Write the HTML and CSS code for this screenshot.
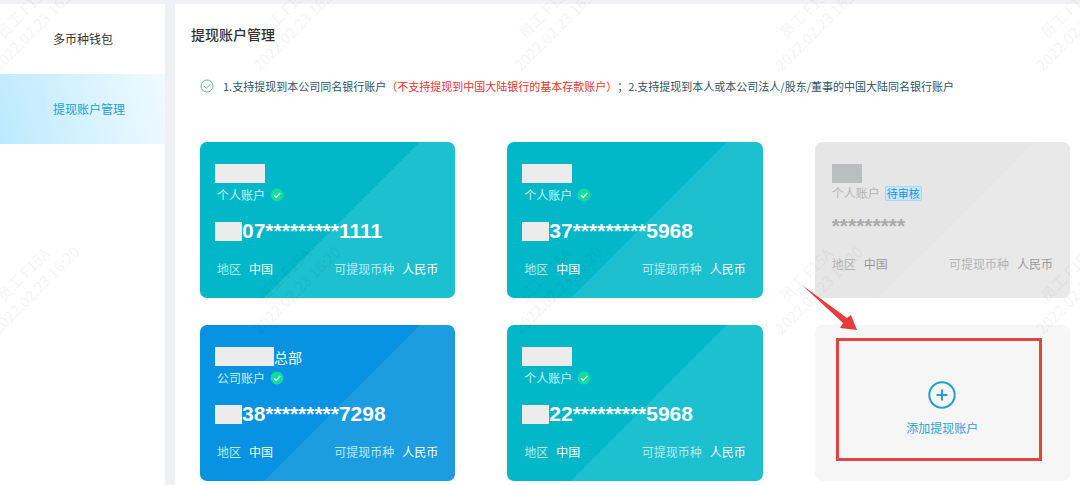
FILE: index.html
```html
<!DOCTYPE html>
<html lang="zh-CN">
<head>
    <meta charset="UTF-8">
    <meta name="viewport" content="width=device-width, initial-scale=1.0">
    <title>提现账户管理</title>
    <link rel="stylesheet" href="styles.css">
</head>
<body>
    <svg class="sprite" aria-hidden="true">
        <symbol id="verified" viewBox="0 0 14 14">
            <circle cx="7" cy="7" r="6.5" fill="#14dc9c"/>
            <path d="M4 7.2l2.2 2.2L10.2 5" fill="none" stroke="#d8fff2" stroke-width="1.5"/>
        </symbol>
    </svg>

    <div class="layout">
        <nav class="sidebar">
            <a href="#wallet" class="menu-item">多币种钱包</a>
            <a href="#accounts" class="menu-item active">提现账户管理</a>
        </nav>

        <main class="content">
            <h1>提现账户管理</h1>
            <p class="tip">
                <svg class="tip-icon" viewBox="0 0 14 14" aria-hidden="true">
                    <circle cx="7" cy="7" r="6" fill="none" stroke="#5cc09a"/>
                    <path d="M4 7l2.3 2.3L10.3 5.2" fill="none" stroke="#5cc09a"/>
                </svg>
                <span>1.支持提现到本公司同名银行账户<em>（不支持提现到中国大陆银行的基本存款账户）</em>；2.支持提现到本人或本公司法人/股东/董事的中国大陆同名银行账户</span>
            </p>

            <div class="cards">
                <article class="card">
                    <div class="name"><span class="mask"></span></div>
                    <div class="type">个人账户<svg class="verified"><use href="#verified"/></svg></div>
                    <div class="number"><span class="mask short"></span>07*********1111</div>
                    <div class="info">
                        <span>地区<b>中国</b></span>
                        <span>可提现币种<b>人民币</b></span>
                    </div>
                </article>

                <article class="card">
                    <div class="name"><span class="mask"></span></div>
                    <div class="type">个人账户<svg class="verified"><use href="#verified"/></svg></div>
                    <div class="number"><span class="mask short"></span>37*********5968</div>
                    <div class="info">
                        <span>地区<b>中国</b></span>
                        <span>可提现币种<b>人民币</b></span>
                    </div>
                </article>

                <article class="card pending">
                    <div class="name"><span class="mask"></span></div>
                    <div class="type">个人账户<span class="tag">待审核</span></div>
                    <div class="number">*********</div>
                    <div class="info">
                        <span>地区<b>中国</b></span>
                        <span>可提现币种<b>人民币</b></span>
                    </div>
                </article>

                <article class="card company">
                    <div class="name"><span class="mask long"></span>总部</div>
                    <div class="type">公司账户<svg class="verified"><use href="#verified"/></svg></div>
                    <div class="number"><span class="mask short"></span>38*********7298</div>
                    <div class="info">
                        <span>地区<b>中国</b></span>
                        <span>可提现币种<b>人民币</b></span>
                    </div>
                </article>

                <article class="card">
                    <div class="name"><span class="mask"></span></div>
                    <div class="type">个人账户<svg class="verified"><use href="#verified"/></svg></div>
                    <div class="number"><span class="mask short"></span>22*********5968</div>
                    <div class="info">
                        <span>地区<b>中国</b></span>
                        <span>可提现币种<b>人民币</b></span>
                    </div>
                </article>

                <div class="add-wrapper">
                    <button type="button" class="add">
                        <svg class="add-icon" viewBox="0 0 28 28" aria-hidden="true">
                            <circle cx="14" cy="14" r="12.7"/>
                            <path d="M14 8.5v11M8.5 14h11"/>
                        </svg>
                        添加提现账户
                    </button>
                    <div class="highlight"></div>
                    <svg class="arrow" viewBox="0 0 56 48" aria-hidden="true">
                        <path d="M0 0L45 33L49 30L55 45L38 43L41 38Z" fill="#e83c3c"/>
                    </svg>
                </div>
            </div>
        </main>
    </div>

    <svg class="watermark" aria-hidden="true">
        <defs>
            <pattern id="stamp" x="-20" y="-30" width="261" height="263" patternUnits="userSpaceOnUse">
                <g transform="translate(19 102) rotate(-45)">
                    <text x="26" y="-20">员工 F15A</text>
                    <text x="0" y="0">2022.02.23 16:20</text>
                </g>
            </pattern>
        </defs>
        <rect width="100%" height="100%" fill="url(#stamp)"/>
    </svg>
</body>
</html>
```
FILE: styles.css
```css
* {
    box-sizing: border-box;
}
body {
    margin: 0;
    background-color: #f0f1f4;
    color: #333;
    font-family: "Noto Sans CJK SC", sans-serif;
    font-size: 12px;
    line-height: 16px;
}
.sprite {
    display: none;
}
.layout {
    display: flex;
    gap: 10px;
    min-height: 100vh;
    padding-top: 4px;
}
.sidebar {
    flex: 0 0 165px;
    background-color: #fff;
}
.menu-item {
    display: flex;
    align-items: center;
    height: 70px;
    padding-left: 53px;
    color: #333;
    text-decoration: none;
}
.menu-item.active {
    background: linear-gradient(75deg, #bce9ff, #f0fbff);
    color: #1a9fe0;
}
.content {
    flex: 1;
    padding: 20px 10px 4px 16px;
    background-color: #fff;
}
h1 {
    margin: 0;
    font-size: 14px;
    font-weight: 500;
    line-height: 20px;
}
.tip {
    display: flex;
    align-items: center;
    gap: 9px;
    margin: 34px 0 48px 9px;
    color: #2f5566;
    font-size: 11px;
    text-spacing-trim: space-all;
}
.tip-icon {
    flex: none;
    width: 14px;
    height: 14px;
}
.tip em {
    color: #e8352e;
    font-style: normal;
}
.cards {
    display: grid;
    grid-template-columns: repeat(3, 1fr);
    gap: 27px 52px;
    margin-left: 9px;
}
.card {
    padding: 22px 17px 21px;
    border-radius: 7px;
    background: linear-gradient(135deg, #02b8c8 155px, #1cc0cf 156px);
    color: #fff;
}
.card.company {
    background: linear-gradient(135deg, #0792e2 155px, #1c9de2 156px);
}
.name,
.number {
    display: flex;
    align-items: center;
}
.name {
    height: 19px;
    font-size: 14px;
}
.mask {
    width: 50px;
    height: 19px;
    margin-left: -2px;
    background-color: #ececed;
}
.mask.long {
    width: 59px;
}
.mask.short {
    width: 27px;
}
.type {
    display: flex;
    align-items: center;
    margin-top: 4px;
    color: #c5f3f7;
}
.verified {
    width: 14px;
    height: 14px;
    margin-left: 5px;
}
.number {
    height: 24px;
    margin-top: 16px;
    font-family: "Liberation Sans", Arial, sans-serif;
    font-size: 21px;
    font-weight: bold;
}
.info {
    display: flex;
    justify-content: space-between;
    margin-top: 18px;
    color: #b5ecf2;
}
.info b {
    margin-left: 8px;
    color: #fff;
    font-weight: normal;
}
.card.pending {
    background: linear-gradient(135deg, #e6e6e6 155px, #e9e9e9 156px);
    color: #aaa;
}
.pending .mask {
    width: 30px;
    margin-left: 0;
    background-color: #b9bfbf;
}
.pending .type {
    margin-top: 2px;
    color: #b5b5b5;
}
.pending .number {
    margin-top: 13px;
}
.pending .info {
    color: #b5b5b5;
}
.pending .info b {
    color: #999;
}
.tag {
    margin-left: 5px;
    padding: 0 1px;
    border: 1px solid #a5d8f8;
    border-radius: 2px;
    background-color: #c6e7fb;
    color: #1a94e0;
    font-size: 11px;
    line-height: 13px;
}
.add-wrapper {
    display: grid;
    position: relative;
}
.add {
    display: flex;
    flex-direction: column;
    align-items: center;
    justify-content: center;
    gap: 11px;
    padding: 10px 0 0;
    border: none;
    border-radius: 7px;
    background-color: #f6f6f6;
    color: #2fa3d9;
    font: inherit;
    cursor: pointer;
}
.add-icon {
    width: 28px;
    height: 28px;
    fill: none;
    stroke: #1f9fd6;
    stroke-width: 2;
}
/* annotation over the add button */
.highlight {
    position: absolute;
    top: 13px;
    right: 28px;
    bottom: 20px;
    left: 21px;
    border: 3px solid #e04444;
    pointer-events: none;
}
.arrow {
    position: absolute;
    top: -40px;
    left: -13px;
    width: 56px;
    height: 48px;
}
.watermark {
    position: fixed;
    top: 0;
    left: 0;
    width: 100%;
    height: 100%;
    font-size: 15px;
    fill: rgba(0, 0, 0, 0.04);
    pointer-events: none;
}
```
